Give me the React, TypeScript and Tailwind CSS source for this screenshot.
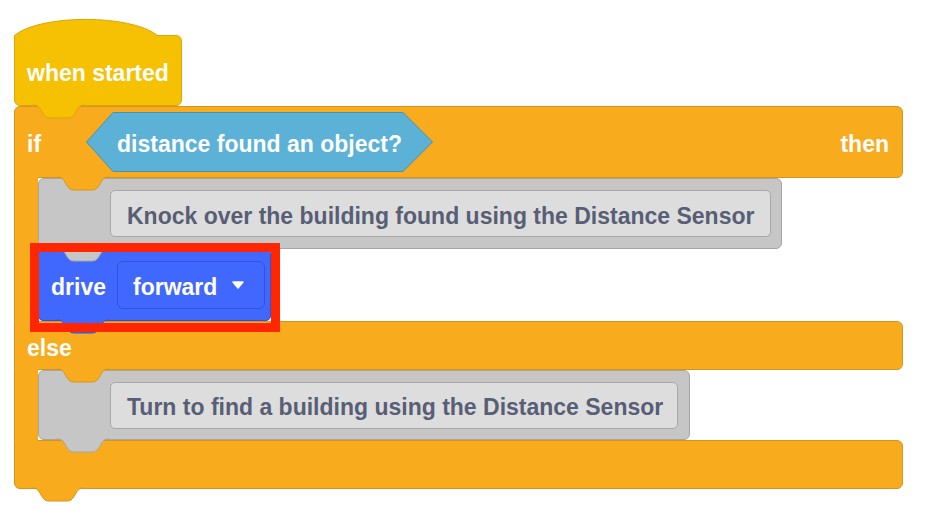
const ORANGE = "#F9AB1E";
const ORANGE_EDGE = "#D8941A";

function Bump({ fill, stroke, className }: { fill: string; stroke: string; className: string }) {
  // the tab under a block that fits into the dip of the next one
  return (
    <svg className={"pointer-events-none absolute top-full z-10 overflow-visible " + className} width="52" height="14" viewBox="0 0 52 14">
      <path
        d="M0 0 C4 0 5 1 7 3.5 L10 8.5 C12 11.5 13.5 13 17 13 H35 C38.5 13 40 11.5 42 8.5 L45 3.5 C47 1 48 0 52 0"
        fill={fill}
        stroke={stroke}
        strokeWidth="1"
      />
    </svg>
  );
}

function Hat() {
  return (
    <div className="relative flex h-[71px] w-[168px] items-center rounded-tr-[6px] rounded-b-[6px] border border-[#D9A70A] bg-[#F6C003] pl-[12px]">
      <svg className="absolute left-[-1px] top-[-18px]" width="145" height="18" viewBox="0 0 145 18">
        <path d="M0.5 18 V17.5 C26 -4 117 -4 143.5 17.5 V18 Z" fill="#F6C003" />
        <path d="M0.5 18 V17.5 C26 -4 117 -4 143.5 17.5" fill="none" stroke="#D9A70A" strokeWidth="1" />
      </svg>
      <span className="pt-[5px]">when started</span>
      <Bump fill="#F6C003" stroke="#D9A70A" className="left-[18px]" />
    </div>
  );
}

function Condition() {
  return (
    <div className="relative ml-[45px] flex h-[60px] w-[347px] items-center pl-[31px]">
      <svg className="absolute inset-0" width="347" height="60" viewBox="0 0 347 60">
        <path d="M0.5 30 L27 0.5 H317 L346.5 30 L317 59.5 H27 Z" fill="#5CB1D6" stroke="#3F93BD" strokeWidth="1" />
      </svg>
      <span className="relative pt-[5px]">distance found an object?</span>
    </div>
  );
}

function Comment({ text, width, label }: { text: string; width: string; label: string }) {
  return (
    <div className={"relative flex items-center rounded-[6px] border border-[#A5A5A5] bg-[#C6C6C6] pl-[71px] " + width}>
      <div className={"flex h-[47px] items-center rounded-[5px] border border-[#A8A8A8] bg-[#DDDDDD] pl-[16px] pt-[5px] text-[#575E75] " + label}>
        {text}
      </div>
      <Bump fill="#C6C6C6" stroke="#A5A5A5" className="left-[18px]" />
    </div>
  );
}

function Drive() {
  return (
    <div className="relative flex h-[72px] w-[233px] items-center rounded-[5px] border border-[#3451D1] bg-[#4068FF] pl-[12px]">
      <span className="pt-[5px]">drive</span>
      <div className="ml-[11px] flex h-[48px] w-[148px] items-center rounded-[6px] border border-[#3454D6] pl-[15px]">
        <span className="pt-[5px]">forward</span>
        <svg className="ml-[15px]" width="12" height="8" viewBox="0 0 12 8">
          <path d="M1 1 H11 L6 7 Z" fill="white" stroke="white" strokeWidth="1.5" strokeLinejoin="round" />
        </svg>
      </div>
      <Bump fill="#4068FF" stroke="#3451D1" className="left-[18px]" />
      <div className="pointer-events-none absolute left-[-9px] top-[-7px] z-20 h-[89px] w-[250px] border-[9px] border-[#FF2600]" />
    </div>
  );
}

function SideBar() {
  return <div className="w-[24px] shrink-0 border-l" style={{ background: ORANGE, borderColor: ORANGE_EDGE }} />;
}

export default function App() {
  return (
    <div className="min-h-[525px] bg-white pl-[14px] pt-[35px] font-['Liberation_Sans',Arial,sans-serif] text-[23px] font-bold leading-none text-white">
      <Hat />
      <div className="w-[889px]">
        {/* if ... then */}
        <div className="relative flex h-[72px] items-center rounded-t-[6px] rounded-br-[6px] border border-[#D8941A] bg-[#F9AB1E] pl-[12px]">
          <span className="absolute bottom-[-1px] left-0 h-px w-[23px] bg-[#F9AB1E]" />
          <span className="pt-[5px]">if</span>
          <Condition />
          <span className="ml-auto mr-[13px] pt-[5px]">then</span>
          <Bump fill="#F9AB1E" stroke="#D8941A" className="left-[42px]" />
        </div>

        <div className="flex">
          <SideBar />
          <div className="flex flex-col items-start">
            <Comment text="Knock over the building found using the Distance Sensor" width="w-[744px] h-[71px]" label="w-[661px]" />
            <Drive />
          </div>
        </div>

        {/* else */}
        <div className="relative flex h-[49px] items-center rounded-r-[6px] border border-[#D8941A] bg-[#F9AB1E] pl-[12px]">
          <span className="absolute top-[-1px] left-0 h-px w-[23px] bg-[#F9AB1E]" />
          <span className="absolute bottom-[-1px] left-0 h-px w-[23px] bg-[#F9AB1E]" />
          <span className="pt-[5px]">else</span>
          <Bump fill="#F9AB1E" stroke="#D8941A" className="left-[42px]" />
        </div>

        <div className="flex">
          <SideBar />
          <div className="flex flex-col items-start">
            <Comment text="Turn to find a building using the Distance Sensor" width="w-[652px] h-[70px]" label="w-[568px]" />
          </div>
        </div>

        <div className="relative h-[49px] rounded-r-[6px] rounded-bl-[6px] border border-[#D8941A] bg-[#F9AB1E]">
          <span className="absolute top-[-1px] left-0 h-px w-[23px] bg-[#F9AB1E]" />
          <Bump fill="#F9AB1E" stroke="#D8941A" className="left-[17px]" />
        </div>
      </div>
    </div>
  );
}
